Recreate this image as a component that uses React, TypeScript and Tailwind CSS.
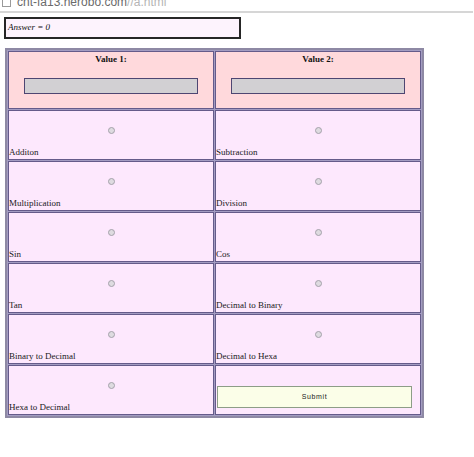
import React from "react";

const serif = { fontFamily: '"Liberation Serif", "Times New Roman", serif' };

function Radio() {
  return <span className="block w-[7px] h-[7px] rounded-full border border-[#a4a1aa] bg-[#dedbe0]" />;
}

function OpCell({ label }: { label: string }) {
  return (
    <div className="h-[50px] bg-[#fde8fd] border border-[#655b8a] flex flex-col items-center justify-between pt-[16px] pb-[1px]">
      <Radio />
      <div className="self-start text-[9px] leading-[11px] text-[#1a1a1a] pl-0" style={serif}>
        {label}
      </div>
    </div>
  );
}

function HeaderCell({ label }: { label: string }) {
  return (
    <div className="h-[58px] bg-[#ffd9dc] border border-[#655b8a] flex flex-col items-center pt-[2px]">
      <div className="text-[9px] leading-[11px] font-bold text-[#111]" style={serif}>
        {label}
      </div>
      <div className="mt-[13px] w-[174px] h-[16px] bg-[#d2d0d3] border border-[#4e4672]" />
    </div>
  );
}

export default function App() {
  const rows: [string, string | null][] = [
    ["Additon", "Subtraction"],
    ["Multiplication", "Division"],
    ["Sin", "Cos"],
    ["Tan", "Decimal to Binary"],
    ["Binary to Decimal", "Decimal to Hexa"],
    ["Hexa to Decimal", null],
  ];
  return (
    <div className="w-[474px] h-[457px] bg-white overflow-hidden">
      <div className="h-[11px] overflow-hidden">
        <div className="flex items-center gap-[6px] pl-[2px] -mt-[5px]">
          <span className="block w-[9px] h-[10px] border border-[#9a9a9a] bg-white" />
          <span className="text-[12px] leading-[14px] whitespace-nowrap" style={{ fontFamily: '"Liberation Sans", Arial, sans-serif' }}>
            <span className="text-[#6a6a6a]">cnt-fa13.herobo.com</span>
            <span className="text-[#b5b5b5]">//a.html</span>
          </span>
        </div>
      </div>
      <div className="h-[2px] w-[473px] bg-[#d6d6d6]" />
      <div className="mt-[4px] ml-[4px] w-[237px] h-[22px] border-2 border-[#262626] bg-[#fdf3fd] flex items-center pl-[2px]">
        <span className="text-[9px] italic text-[#111]" style={serif}>
          Answer = 0
        </span>
      </div>
      <div className="mt-[9px] ml-[5px] w-[419px] border-2 border-[#8e89a4] bg-[#a39cc2] p-[1px] grid grid-cols-2 gap-[1px]">
        <HeaderCell label="Value 1:" />
        <HeaderCell label="Value 2:" />
        {rows.map(([a, b]) => (
          <React.Fragment key={a}>
            <OpCell label={a} />
            {b ? (
              <OpCell label={b} />
            ) : (
              <div className="h-[50px] bg-[#fde8fd] border border-[#655b8a] pt-[15px] pl-[1px]">
                <button
                  className="w-[195px] h-[22px] bg-[#fbfee8] border border-[#8d9d87] text-[7px] tracking-[0.6px] text-[#222]"
                  style={{ fontFamily: '"Liberation Sans", Arial, sans-serif' }}
                >
                  Submit
                </button>
              </div>
            )}
          </React.Fragment>
        ))}
      </div>
    </div>
  );
}
